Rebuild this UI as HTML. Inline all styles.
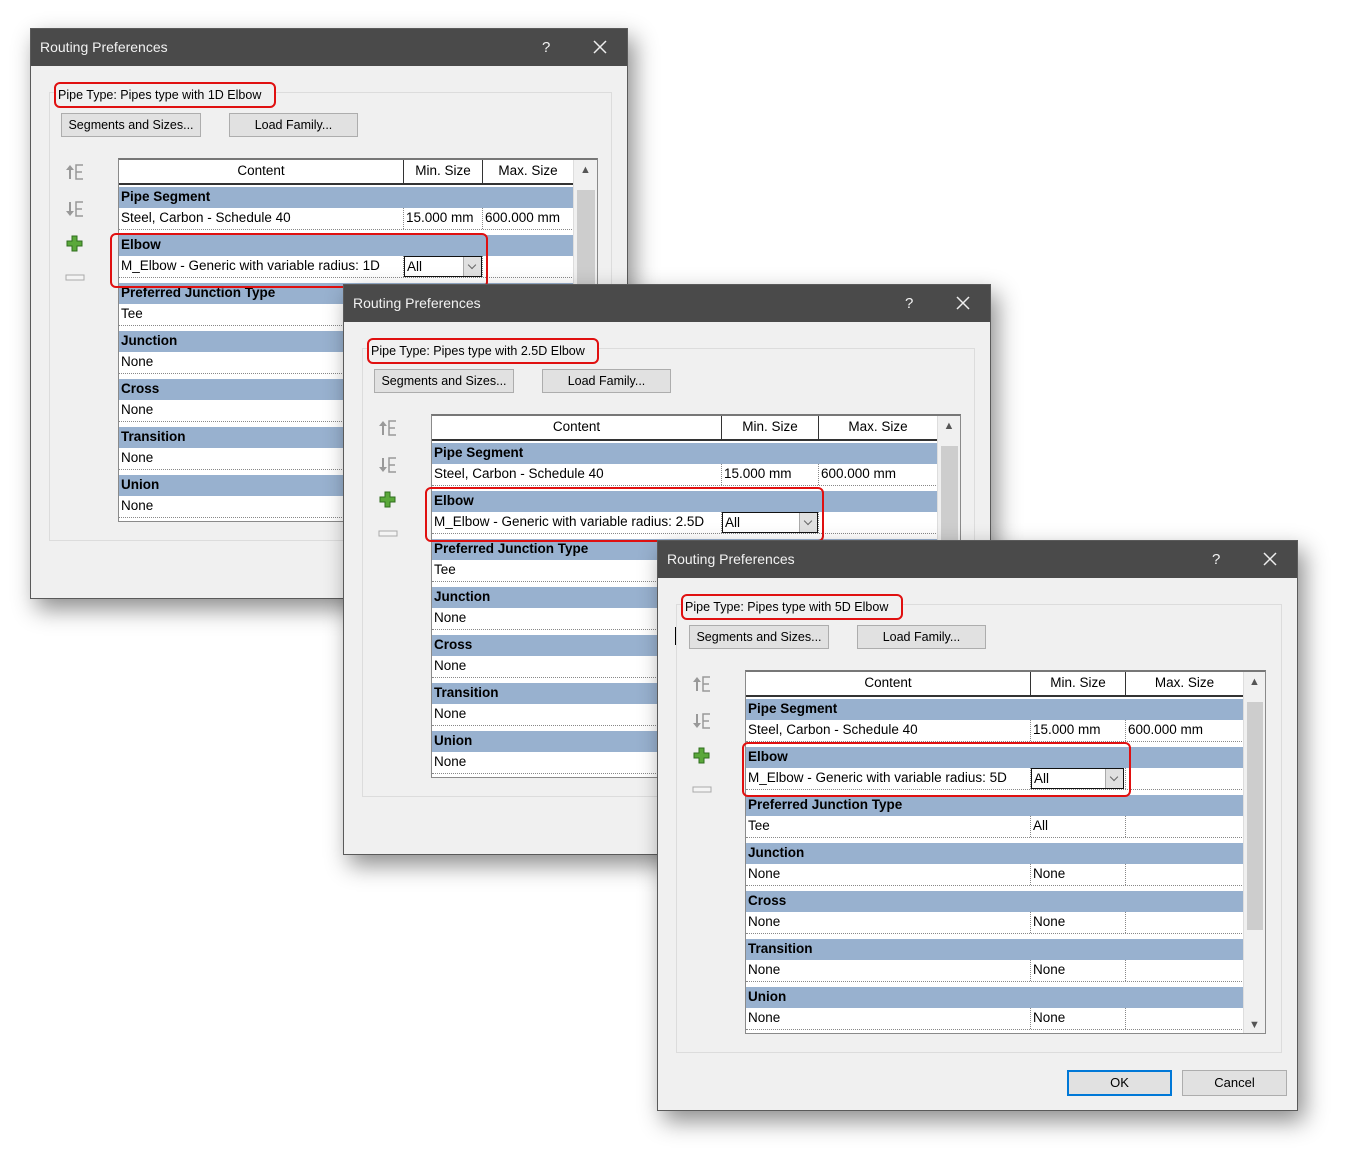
<!DOCTYPE html>
<html><head><meta charset="utf-8">
<style>
*{box-sizing:border-box;margin:0;padding:0}
body{width:1355px;height:1158px;background:#fff;position:relative;overflow:hidden;font-family:"Liberation Sans",sans-serif;font-size:13px;color:#000}
.dlg{position:absolute;height:571px;background:#f0f0f0;border:1px solid #5a5a5a;box-shadow:6px 10px 22px rgba(0,0,0,.45)}
.tb{height:37px;background:#4a4a4a;color:#f2f2f2;font-size:14px;line-height:37px;padding-left:9px;position:relative}
.tb .q{position:absolute;top:0;font-size:15px}
.tb .x{position:absolute;top:11px;width:14px;height:14px}
.grp{position:absolute;left:18px;top:63px;height:449px;border:1px solid #dcdcdc}
.pt{position:absolute;left:23px;top:53px;height:26px;line-height:23px;border:2px solid #e01010;border-radius:6px;padding:0 6px 0 2px;background:#f0f0f0;font-size:12.5px;white-space:nowrap}
.btn{position:absolute;top:84px;height:24px;border:1px solid #adadad;background:#e1e1e1;text-align:center;line-height:22px;font-size:12.5px}
.ic{position:absolute;left:34px}
.tbl{position:absolute;left:87px;top:129px;height:364px;border:1px solid #8a8a8a;border-top:2px solid #777;background:#fff;overflow:hidden}
.hd{display:flex;height:25px;border-bottom:2px solid #333}
.hd div{border-right:1px solid #333;text-align:center;line-height:22px;font-size:13.5px}
.cat{height:21px;background:#98b1cf;font-weight:bold;line-height:20px;padding-left:2px;margin-top:5px;font-size:13.5px}
.cat.first{margin-top:2px}
.row{display:flex;height:22px;line-height:20px;border-bottom:1px dotted #888;font-size:13.5px}
.row div{padding-left:2px;white-space:nowrap;overflow:hidden;border-right:1px dotted #888;position:relative}
.sb{position:absolute;right:0;top:0;bottom:0;background:#f0f0f0;border-left:1px solid #ddd}
.sb .th{position:absolute;left:3px;right:2px;top:30px;height:228px;background:#cdcdcd}
.sb .ar{position:absolute;left:0;right:0;text-align:center;font-size:11px;color:#555}
.dd{position:absolute;left:0;top:0;height:21px;border:1px solid #111;background:#fff;padding-left:2px;line-height:19px}
.dd i{position:absolute;right:0;top:0;width:18px;height:19px;background:#e0e0e0;border-left:1px solid #aaa}
.dd i:after{content:"";position:absolute;left:5px;top:5px;width:5px;height:5px;border-right:1px solid #666;border-bottom:1px solid #666;transform:rotate(45deg)}
.red{position:absolute;border:2px solid #e01010;border-radius:6px}
.bo{position:absolute;top:529px;width:105px;height:26px;border:1px solid #adadad;background:#e1e1e1;text-align:center;line-height:24px;font-size:13px}
</style></head><body>

<div class="dlg" style="left:30px;top:28px;width:598px;--a:285px;--b:79px;--c:91px">
 <div class="tb">Routing Preferences<span class="q" style="left:511px">?</span>
  <svg class="x" style="left:562px" viewBox="0 0 14 14"><path d="M1 1L13 13M13 1L1 13" stroke="#eee" stroke-width="1.5"/></svg></div>
 <div class="grp" style="width:563px"></div>
 <div class="pt" style="width:222px">Pipe Type: Pipes type with 1D Elbow</div>
 <div class="btn" style="left:30px;width:140px">Segments and Sizes...</div>
 <div class="btn" style="left:198px;width:129px">Load Family...</div>
 <svg class="ic" style="top:133px" width="22" height="20" viewBox="0 0 22 20"><path d="M5 3L1 8H4V17H6V8H9Z" fill="#999"/><path d="M18 3H11V17H18M11 10H17" stroke="#999" stroke-width="1.5" fill="none"/></svg>
 <svg class="ic" style="top:170px" width="22" height="20" viewBox="0 0 22 20"><path d="M5 17L1 12H4V3H6V12H9Z" fill="#999"/><path d="M18 3H11V17H18M11 10H17" stroke="#999" stroke-width="1.5" fill="none"/></svg>
 <svg class="ic" style="top:205px" width="20" height="20" viewBox="0 0 20 20"><path d="M7 2H12V7H17V12H12V17H7V12H2V7H7Z" fill="#5aa83a" stroke="#2f6e1e"/></svg>
 <svg class="ic" style="top:244px" width="20" height="10" viewBox="0 0 20 10"><rect x="1" y="2" width="18" height="5" fill="#f4f4f4" stroke="#aaa"/></svg>
 <div class="tbl" style="width:480px">
  <div class="hd"><div style="width:var(--a)">Content</div><div style="width:var(--b)">Min. Size</div><div style="width:var(--c)">Max. Size</div></div>
  <div style="width:calc(var(--a) + var(--b) + var(--c))">
   <div class="cat first">Pipe Segment</div>
   <div class="row"><div style="width:var(--a)">Steel, Carbon - Schedule 40</div><div style="width:var(--b)">15.000 mm</div><div style="width:var(--c)">600.000 mm</div></div>
   <div class="cat">Elbow</div>
   <div class="row"><div style="width:var(--a)">M_Elbow - Generic with variable radius: 1D</div><div style="width:var(--b);overflow:visible"><span class="dd" style="width:78px">All<i></i></span></div><div style="width:var(--c)"></div></div>
   <div class="cat">Preferred Junction Type</div>
   <div class="row"><div style="width:var(--a)">Tee</div><div style="width:var(--b)">All</div><div style="width:var(--c)"></div></div>
   <div class="cat">Junction</div>
   <div class="row"><div style="width:var(--a)">None</div><div style="width:var(--b)">None</div><div style="width:var(--c)"></div></div>
   <div class="cat">Cross</div>
   <div class="row"><div style="width:var(--a)">None</div><div style="width:var(--b)">None</div><div style="width:var(--c)"></div></div>
   <div class="cat">Transition</div>
   <div class="row"><div style="width:var(--a)">None</div><div style="width:var(--b)">None</div><div style="width:var(--c)"></div></div>
   <div class="cat">Union</div>
   <div class="row"><div style="width:var(--a)">None</div><div style="width:var(--b)">None</div><div style="width:var(--c)"></div></div>
  </div>
  <div class="sb" style="width:24px"><div class="ar" style="top:4px">&#9650;</div><div class="th"></div></div>
 </div>
 <div class="red" style="left:79px;top:204px;width:378px;height:55px"></div>
</div>

<div class="dlg" style="left:343px;top:284px;width:648px;--a:290px;--b:97px;--c:119px">
 <div class="tb">Routing Preferences<span class="q" style="left:561px">?</span>
  <svg class="x" style="left:612px" viewBox="0 0 14 14"><path d="M1 1L13 13M13 1L1 13" stroke="#eee" stroke-width="1.5"/></svg></div>
 <div class="grp" style="width:613px"></div>
 <div class="pt" style="width:232px">Pipe Type: Pipes type with 2.5D Elbow</div>
 <div class="btn" style="left:30px;width:140px">Segments and Sizes...</div>
 <div class="btn" style="left:198px;width:129px">Load Family...</div>
 <svg class="ic" style="top:133px" width="22" height="20" viewBox="0 0 22 20"><path d="M5 3L1 8H4V17H6V8H9Z" fill="#999"/><path d="M18 3H11V17H18M11 10H17" stroke="#999" stroke-width="1.5" fill="none"/></svg>
 <svg class="ic" style="top:170px" width="22" height="20" viewBox="0 0 22 20"><path d="M5 17L1 12H4V3H6V12H9Z" fill="#999"/><path d="M18 3H11V17H18M11 10H17" stroke="#999" stroke-width="1.5" fill="none"/></svg>
 <svg class="ic" style="top:205px" width="20" height="20" viewBox="0 0 20 20"><path d="M7 2H12V7H17V12H12V17H7V12H2V7H7Z" fill="#5aa83a" stroke="#2f6e1e"/></svg>
 <svg class="ic" style="top:244px" width="20" height="10" viewBox="0 0 20 10"><rect x="1" y="2" width="18" height="5" fill="#f4f4f4" stroke="#aaa"/></svg>
 <div class="tbl" style="width:530px">
  <div class="hd"><div style="width:var(--a)">Content</div><div style="width:var(--b)">Min. Size</div><div style="width:var(--c)">Max. Size</div></div>
  <div style="width:calc(var(--a) + var(--b) + var(--c))">
   <div class="cat first">Pipe Segment</div>
   <div class="row"><div style="width:var(--a)">Steel, Carbon - Schedule 40</div><div style="width:var(--b)">15.000 mm</div><div style="width:var(--c)">600.000 mm</div></div>
   <div class="cat">Elbow</div>
   <div class="row"><div style="width:var(--a)">M_Elbow - Generic with variable radius: 2.5D</div><div style="width:var(--b);overflow:visible"><span class="dd" style="width:96px">All<i></i></span></div><div style="width:var(--c)"></div></div>
   <div class="cat">Preferred Junction Type</div>
   <div class="row"><div style="width:var(--a)">Tee</div><div style="width:var(--b)">All</div><div style="width:var(--c)"></div></div>
   <div class="cat">Junction</div>
   <div class="row"><div style="width:var(--a)">None</div><div style="width:var(--b)">None</div><div style="width:var(--c)"></div></div>
   <div class="cat">Cross</div>
   <div class="row"><div style="width:var(--a)">None</div><div style="width:var(--b)">None</div><div style="width:var(--c)"></div></div>
   <div class="cat">Transition</div>
   <div class="row"><div style="width:var(--a)">None</div><div style="width:var(--b)">None</div><div style="width:var(--c)"></div></div>
   <div class="cat">Union</div>
   <div class="row"><div style="width:var(--a)">None</div><div style="width:var(--b)">None</div><div style="width:var(--c)"></div></div>
  </div>
  <div class="sb" style="width:23px"><div class="ar" style="top:4px">&#9650;</div><div class="th"></div></div>
 </div>
 <div class="red" style="left:81px;top:202px;width:399px;height:55px"></div>
</div>

<div class="dlg" style="left:657px;top:540px;width:641px;--a:285px;--b:95px;--c:118px">
 <div class="tb">Routing Preferences<span class="q" style="left:554px">?</span>
  <svg class="x" style="left:605px" viewBox="0 0 14 14"><path d="M1 1L13 13M13 1L1 13" stroke="#eee" stroke-width="1.5"/></svg></div>
 <div class="grp" style="width:606px"></div>
 <div style="position:absolute;left:17px;top:86px;width:1px;height:18px;background:#000"></div>
 <div class="pt" style="width:222px">Pipe Type: Pipes type with 5D Elbow</div>
 <div class="btn" style="left:31px;width:140px">Segments and Sizes...</div>
 <div class="btn" style="left:199px;width:129px">Load Family...</div>
 <svg class="ic" style="top:133px" width="22" height="20" viewBox="0 0 22 20"><path d="M5 3L1 8H4V17H6V8H9Z" fill="#999"/><path d="M18 3H11V17H18M11 10H17" stroke="#999" stroke-width="1.5" fill="none"/></svg>
 <svg class="ic" style="top:170px" width="22" height="20" viewBox="0 0 22 20"><path d="M5 17L1 12H4V3H6V12H9Z" fill="#999"/><path d="M18 3H11V17H18M11 10H17" stroke="#999" stroke-width="1.5" fill="none"/></svg>
 <svg class="ic" style="top:205px" width="20" height="20" viewBox="0 0 20 20"><path d="M7 2H12V7H17V12H12V17H7V12H2V7H7Z" fill="#5aa83a" stroke="#2f6e1e"/></svg>
 <svg class="ic" style="top:244px" width="20" height="10" viewBox="0 0 20 10"><rect x="1" y="2" width="18" height="5" fill="#f4f4f4" stroke="#aaa"/></svg>
 <div class="tbl" style="left:87px;width:521px">
  <div class="hd"><div style="width:var(--a)">Content</div><div style="width:var(--b)">Min. Size</div><div style="width:var(--c)">Max. Size</div></div>
  <div style="width:calc(var(--a) + var(--b) + var(--c))">
   <div class="cat first">Pipe Segment</div>
   <div class="row"><div style="width:var(--a)">Steel, Carbon - Schedule 40</div><div style="width:var(--b)">15.000 mm</div><div style="width:var(--c)">600.000 mm</div></div>
   <div class="cat">Elbow</div>
   <div class="row"><div style="width:var(--a)">M_Elbow - Generic with variable radius: 5D</div><div style="width:var(--b);overflow:visible"><span class="dd" style="width:93px">All<i></i></span></div><div style="width:var(--c)"></div></div>
   <div class="cat">Preferred Junction Type</div>
   <div class="row"><div style="width:var(--a)">Tee</div><div style="width:var(--b)">All</div><div style="width:var(--c)"></div></div>
   <div class="cat">Junction</div>
   <div class="row"><div style="width:var(--a)">None</div><div style="width:var(--b)">None</div><div style="width:var(--c)"></div></div>
   <div class="cat">Cross</div>
   <div class="row"><div style="width:var(--a)">None</div><div style="width:var(--b)">None</div><div style="width:var(--c)"></div></div>
   <div class="cat">Transition</div>
   <div class="row"><div style="width:var(--a)">None</div><div style="width:var(--b)">None</div><div style="width:var(--c)"></div></div>
   <div class="cat">Union</div>
   <div class="row"><div style="width:var(--a)">None</div><div style="width:var(--b)">None</div><div style="width:var(--c)"></div></div>
  </div>
  <div class="sb" style="width:22px"><div class="ar" style="top:4px">&#9650;</div><div class="th"></div><div class="ar" style="bottom:2px">&#9660;</div></div>
 </div>
 <div class="red" style="left:84px;top:201px;width:389px;height:55px"></div>
 <div class="bo" style="left:409px;border:2px solid #0078d7;line-height:22px">OK</div>
 <div class="bo" style="left:524px">Cancel</div>
</div>
</body></html>
